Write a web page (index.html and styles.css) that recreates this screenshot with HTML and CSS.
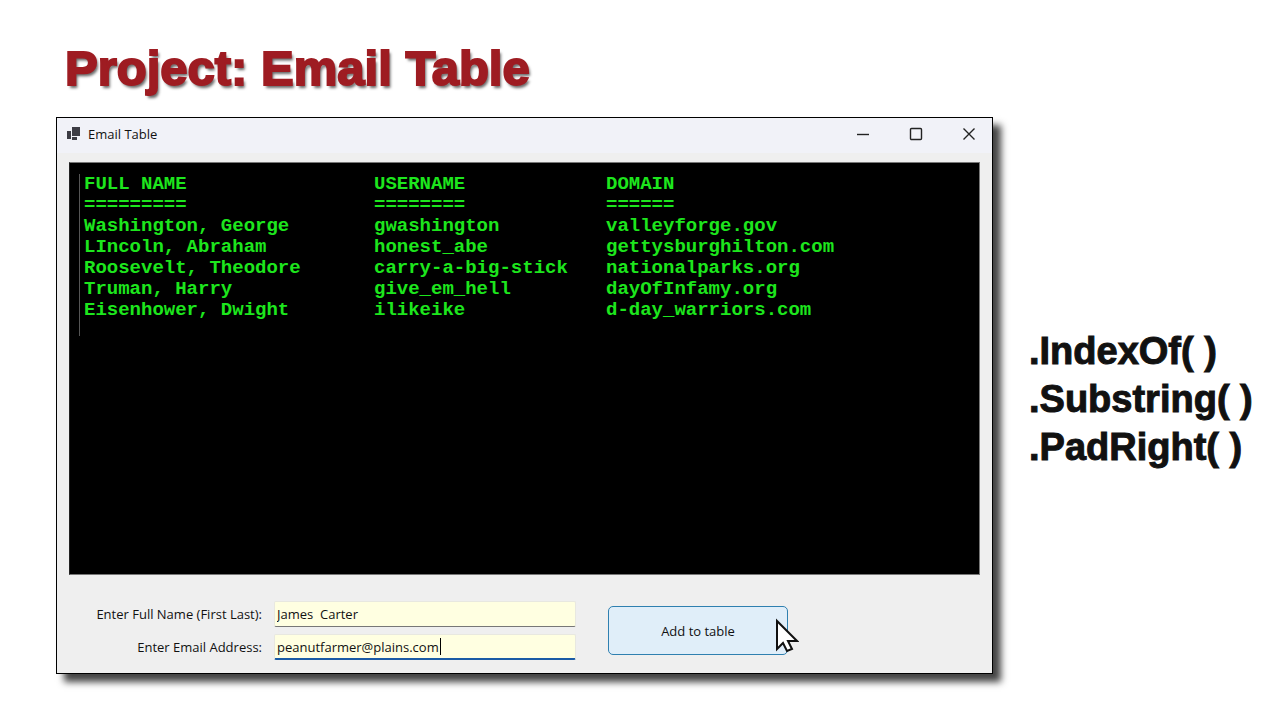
FILE: index.html
```html
<!DOCTYPE html>
<html lang="en">
  <head>
    <meta charset="UTF-8">
    <meta name="viewport" content="width=device-width, initial-scale=1">
    <title>Project: Email Table</title>
    <link rel="stylesheet" href="styles.css">
  </head>
  <body>

    <h1 class="page-title">Project: Email Table</h1>

    <div class="container-page">

      <main class="window">
        <header class="titlebar">
          <svg class="app-icon" width="15" height="14" viewBox="0 0 15 14" aria-hidden="true">
            <path fill="#3c3c44" d="M6 0h8v9H6zM1 4h4v8H1zM6 10h5v3H6z"/>
          </svg>
          <span class="titlebar-text">Email Table</span>
          <button type="button" class="btn-window" aria-label="Minimize">
            <svg width="14" height="14" viewBox="0 0 14 14"><path d="M1 7.5h12"/></svg>
          </button>
          <button type="button" class="btn-window" aria-label="Maximize">
            <svg width="14" height="14" viewBox="0 0 14 14"><rect x="1.5" y="1.5" width="11" height="11" rx="1"/></svg>
          </button>
          <button type="button" class="btn-window" aria-label="Close">
            <svg width="14" height="14" viewBox="0 0 14 14"><path d="M1.5 1.5l11 11M12.5 1.5l-11 11"/></svg>
          </button>
        </header>

        <div class="console">
          <div class="console-output">
            <table class="email-table">
              <thead>
                <tr><th class="col-name">FULL NAME</th><th class="col-user">USERNAME</th><th>DOMAIN</th></tr>
                <tr><td>=========</td><td>========</td><td>======</td></tr>
              </thead>
              <tbody>
                <tr><td>Washington, George</td><td>gwashington</td><td>valleyforge.gov</td></tr>
                <tr><td>LIncoln, Abraham</td><td>honest_abe</td><td>gettysburghilton.com</td></tr>
                <tr><td>Roosevelt, Theodore</td><td>carry-a-big-stick</td><td>nationalparks.org</td></tr>
                <tr><td>Truman, Harry</td><td>give_em_hell</td><td>dayOfInfamy.org</td></tr>
                <tr><td>Eisenhower, Dwight</td><td>ilikeike</td><td>d-day_warriors.com</td></tr>
              </tbody>
            </table>
          </div>
        </div>

        <form class="entry-form" action="">
          <div class="fields">
            <label for="full-name">Enter Full Name (First Last):</label>
            <div class="field">
              <input type="text" id="full-name" value="James  Carter">
            </div>
            <label for="email">Enter Email Address:</label>
            <div class="field field-active">
              <input type="text" id="email" value="peanutfarmer@plains.com">
              <span class="caret"></span>
            </div>
          </div>
          <div class="action">
            <button type="button" class="btn-add">Add to table</button>
            <svg class="cursor" width="24" height="36" viewBox="0 0 24 36" aria-hidden="true">
              <path d="M2 3v28l6-6 4 8 5-2-4-8h9z"/>
            </svg>
          </div>
        </form>
      </main>

      <ul class="methods">
        <li>.IndexOf( )</li>
        <li>.Substring( )</li>
        <li>.PadRight( )</li>
      </ul>

    </div>

  </body>
</html>
```
FILE: styles.css
```css
* { box-sizing: border-box }

body { margin: 0; padding: 40px 20px 40px 56px; background: #fff; color: #111 }
body { font-family: "Open Sans", "Noto Sans", sans-serif; font-size: 13px; line-height: 20px }

.page-title {
  margin: 0 0 21px 9px;
  font: bold 49px/56px "Liberation Sans", Arial, sans-serif;
  color: #9e1c22;
  -webkit-text-stroke: 2px #9e1c22;
  text-shadow: 2px 3px 3px rgba(0, 0, 0, .6);
}

.container-page { display: flex; align-items: center; gap: 36px }

/* window */

.window {
  flex: 1;
  border: 1px solid #000;
  background: #efefef;
  box-shadow: 8px 8px 7px #444;
}

.titlebar { display: flex; align-items: center; height: 35px; padding: 0 3px 4px 9px; background: #f1f2f8 }
.app-icon { margin-right: 7px }
.titlebar-text { flex: 1 }

.btn-window {
  display: flex;
  align-items: center;
  justify-content: center;
  width: 40px;
  height: 31px;
  margin-left: 13px;
  padding: 0;
  border: 0;
  background: none;
}
.btn-window svg { fill: none; stroke: #222; stroke-width: 1.4 }

/* console */

.console { min-height: 413px; margin: 9px 12px 0; padding: 11px 9px; border: 1px solid #777; border-left-color: #222; background: #000 }
.console-output { padding-bottom: 15px; border-left: 1px solid #555 }

.email-table {
  width: 100%;
  border-spacing: 0;
  table-layout: fixed;
  color: #1de61d;
  font: bold 19px/21px "Liberation Mono", "Courier New", monospace;
}
.email-table th, .email-table td { padding: 0 0 0 4px; text-align: left; white-space: nowrap }
.email-table .col-name { width: 290px }
.email-table .col-user { width: 232px }

/* form */

.entry-form { display: flex; align-items: center; gap: 32px; padding: 26px 12px 13px }
.fields { display: grid; grid-template-columns: 193px 302px; gap: 7px 12px; align-items: center }
.fields label { text-align: right }

.field { position: relative; display: flex }
.field input {
  width: 100%;
  height: 26px;
  padding: 0 2px;
  border: 1px solid #e8e8e0;
  border-bottom-color: #777;
  border-radius: 2px;
  outline: 0;
  background: #ffffe1;
  color: #111;
  font: inherit;
}
.field-active input { border-bottom: 2px solid #1a5ba6 }
.caret { position: absolute; left: 166px; top: 4px; width: 1px; height: 17px; background: #000 }

.action { position: relative }
.btn-add {
  display: block;
  width: 180px;
  height: 49px;
  border: 1px solid #2f80b0;
  border-radius: 5px;
  background: #e0eef9;
  color: #111;
  font: inherit;
}
.cursor { position: absolute; left: 167px; top: 12px; fill: #fff; stroke: #111; stroke-width: 2 }

/* string methods */

.methods {
  margin: 0;
  padding: 6px 0 0;
  width: 231px;
  list-style: none;
  font: bold 38px/48px "Liberation Sans", Arial, sans-serif;
  white-space: nowrap;
  -webkit-text-stroke: 1px #111;
}
```
